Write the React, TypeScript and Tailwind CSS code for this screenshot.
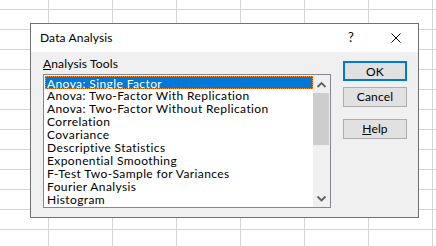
const tools = [
  'Anova: Single Factor',
  'Anova: Two-Factor With Replication',
  'Anova: Two-Factor Without Replication',
  'Correlation',
  'Covariance',
  'Descriptive Statistics',
  'Exponential Smoothing',
  'F-Test Two-Sample for Variances',
  'Fourier Analysis',
  'Histogram',
];

function Chevron({ dir }: { dir: 'up' | 'down' }) {
  return (
    <svg width="17" height="17" viewBox="0 0 17 17">
      <polyline
        points={dir === 'up' ? '4.5,12 8.5,8 12.5,12' : '4.5,6.5 8.5,10.5 12.5,6.5'}
        fill="none"
        stroke="#606060"
        strokeWidth="1.8"
      />
    </svg>
  );
}

export default function App() {
  return (
    <div className="relative h-[246px] w-[436px] overflow-hidden bg-white bg-[linear-gradient(to_right,#d4d4d4_1px,transparent_1px),linear-gradient(to_bottom,#d4d4d4_1px,transparent_1px)] bg-size-[64px_20px] bg-position-[48px_9px] font-['Lato',sans-serif] text-[12px] tracking-[0.15px] text-black">
      <div className="absolute left-[30px] top-[23px] flex h-[195px] w-[389px] flex-col border border-[#717171] bg-[#f0f0f0]">
        {/* title bar */}
        <div className="flex h-[28px] items-center bg-white pl-[9px]">
          <span>Data Analysis</span>
          <span className="ml-auto w-[46px] text-center text-[13px]">?</span>
          <span className="flex w-[44px] justify-center">
            <svg width="10" height="10" viewBox="0 0 10 10">
              <path d="M0.5 0.5 L9.5 9.5 M9.5 0.5 L0.5 9.5" stroke="#000" strokeWidth="1" />
            </svg>
          </span>
        </div>

        <div className="flex flex-1 pl-[12px]">
          <div className="flex flex-col pt-[4px]">
            <span className="h-[18px] leading-[15px]">
              <span className="underline">A</span>nalysis Tools
            </span>
            <div className="flex h-[134px] w-[288px] border border-[#828790] bg-white">
              <ul className="flex-1 py-px pl-px tracking-[0.4px]">
                {tools.map((tool, i) => (
                  <li
                    key={tool}
                    className={[
                      'h-[13px] whitespace-nowrap leading-[13px]',
                      i === 0
                        ? 'border border-dotted border-[#ff8728] bg-[#0078d7] pl-px leading-[11px] text-white'
                        : 'pl-[2px]',
                    ].join(' ')}
                  >
                    {tool}
                  </li>
                ))}
              </ul>
              <div className="flex w-[17px] flex-col bg-[#f0f0f0]">
                <Chevron dir="up" />
                <div className="mt-px h-[52px] w-[16px] bg-[#cdcdcd]" />
                <div className="flex-1" />
                <Chevron dir="down" />
              </div>
            </div>
          </div>

          <div className="ml-[12px] mt-[9px] flex flex-col">
            <button type="button" className="h-[20px] w-[64px] border-2 border-[#0078d7] bg-[#e1e1e1]">
              OK
            </button>
            <button type="button" className="mt-[6px] h-[20px] w-[64px] border border-[#adadad] bg-[#e1e1e1]">
              Cancel
            </button>
            <button type="button" className="mt-[12px] h-[20px] w-[64px] border border-[#adadad] bg-[#e1e1e1]">
              <span className="underline">H</span>elp
            </button>
          </div>
        </div>
      </div>
    </div>
  );
}
